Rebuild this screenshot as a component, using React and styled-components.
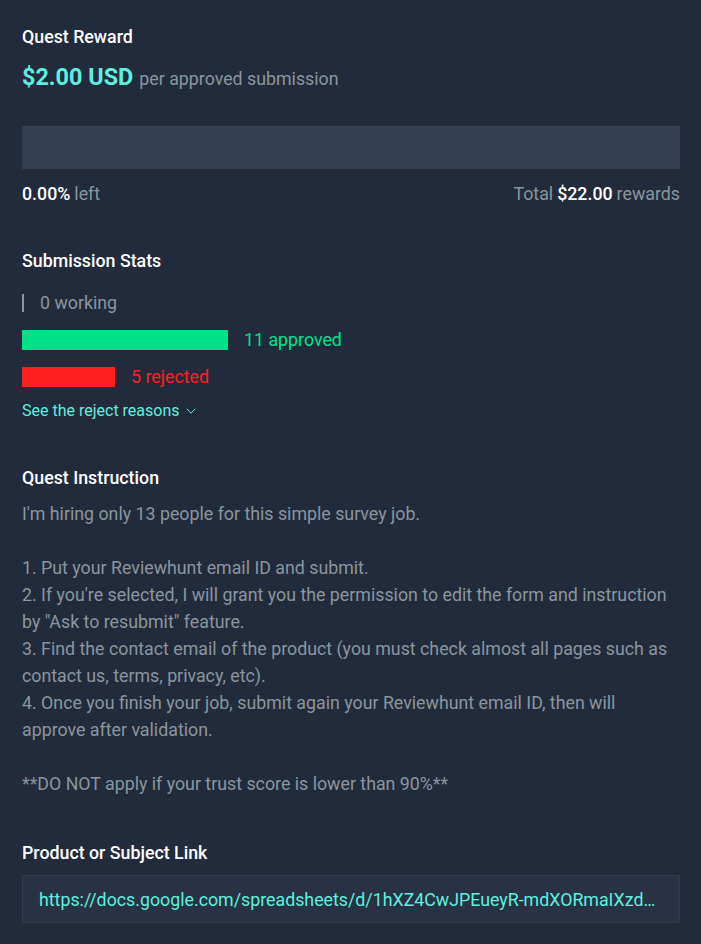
import React from "react";
import styled, { createGlobalStyle } from "styled-components";

const Global = createGlobalStyle`
  html, body { margin: 0; padding: 0; background: #222b3c; }
  body { font-family: Roboto, "Noto Sans", "Liberation Sans", sans-serif; -webkit-font-smoothing: antialiased; }
  * { box-sizing: border-box; }
`;

const Page = styled.div`
  background: #222b3c;
  min-height: 944px;
  padding: 25px 21px 20px 22px;
  display: flex;
  flex-direction: column;
`;

const Title = styled.div`
  color: #ffffff;
  font-size: 17.8px;
  font-weight: 500;
  line-height: 24px;
`;

const RewardLine = styled.div`
  margin-top: 13px;
  display: flex;
  align-items: baseline;
  gap: 6px;
  line-height: 30px;
`;

const Amount = styled.span`
  color: #5ef0df;
  font-size: 23.4px;
  font-weight: 700;
`;

const Muted = styled.span`
  color: #8a959e;
  font-size: 17.8px;
`;

const Strong = styled.span`
  color: #ffffff;
  font-size: 17.8px;
  font-weight: 500;
`;

const Track = styled.div`
  margin-top: 32px;
  height: 43px;
  background: #333f50;
`;

const RewardFoot = styled.div`
  margin-top: 13px;
  display: flex;
  justify-content: space-between;
  line-height: 24px;
`;

const Section = styled.section`
  margin-top: ${(p) => p.$top}px;
  display: flex;
  flex-direction: column;
`;

const StatRow = styled.div`
  display: flex;
  align-items: center;
  gap: 16px;
  height: 20px;
  margin-top: ${(p) => p.$top}px;
`;

const Bar = styled.div`
  height: ${(p) => p.$h || 20}px;
  background: ${(p) => p.$color};
  flex: none;
`;

const StatLabel = styled.span`
  color: ${(p) => p.$color};
  font-size: 17.8px;
  line-height: 20px;
`;

const ToggleLink = styled.a`
  margin-top: 14px;
  color: #5ef0df;
  font-size: 16px;
  line-height: 20px;
  display: inline-flex;
  align-items: center;
  gap: 6px;
  cursor: pointer;
  align-self: flex-start;
`;

const Instruction = styled.div`
  margin-top: 10px;
  color: #8a959e;
  font-size: 17.8px;
  line-height: 27px;
  white-space: pre-wrap;
`;

const LinkBox = styled.div`
  margin-top: 10px;
  height: 48px;
  border: 1px solid #313c4d;
  background: #283244;
  display: flex;
  align-items: center;
  padding: 0 16px;
`;

const LinkText = styled.a`
  color: #5ef0df;
  font-size: 17.8px;
  white-space: nowrap;
  overflow: hidden;
  text-overflow: ellipsis;
  text-decoration: none;
`;

const instruction = `I'm hiring only 13 people for this simple survey job.

1. Put your Reviewhunt email ID and submit.
2. If you're selected, I will grant you the permission to edit the form and instruction by "Ask to resubmit" feature.
3. Find the contact email of the product (you must check almost all pages such as contact us, terms, privacy, etc).
4. Once you finish your job, submit again your Reviewhunt email ID, then will approve after validation.

**DO NOT apply if your trust score is lower than 90%**`;

export default function App() {
  return (
    <>
      <Global />
      <Page>
        <Title>Quest Reward</Title>
        <RewardLine>
          <Amount>$2.00 USD</Amount>
          <Muted>per approved submission</Muted>
        </RewardLine>
        <Track />
        <RewardFoot>
          <span>
            <Strong>0.00%</Strong> <Muted>left</Muted>
          </span>
          <span>
            <Muted>Total</Muted> <Strong>$22.00</Strong> <Muted>rewards</Muted>
          </span>
        </RewardFoot>

        <Section $top={42}>
          <Title>Submission Stats</Title>
          <StatRow $top={20}>
            <Bar $color="#8a959e" $h={18} style={{ width: 2 }} />
            <StatLabel $color="#8a959e">0 working</StatLabel>
          </StatRow>
          <StatRow $top={17}>
            <Bar $color="#00e189" style={{ width: 206 }} />
            <StatLabel $color="#00e189">11 approved</StatLabel>
          </StatRow>
          <StatRow $top={17}>
            <Bar $color="#ff1f1f" style={{ width: 93 }} />
            <StatLabel $color="#ff1f1f">5 rejected</StatLabel>
          </StatRow>
          <ToggleLink>
            See the reject reasons
            <svg width="10" height="6" viewBox="0 0 10 6" fill="none">
              <path d="M0.8 0.8L5 5.2L9.2 0.8" stroke="#5ef0df" strokeWidth="1" />
            </svg>
          </ToggleLink>
        </Section>

        <Section $top={45}>
          <Title>Quest Instruction</Title>
          <Instruction>{instruction}</Instruction>
        </Section>

        <Section $top={44}>
          <Title>Product or Subject Link</Title>
          <LinkBox>
            <LinkText>https://docs.google.com/spreadsheets/d/1hXZ4CwJPEueyR-mdXORmaIXzd…</LinkText>
          </LinkBox>
        </Section>
      </Page>
    </>
  );
}
